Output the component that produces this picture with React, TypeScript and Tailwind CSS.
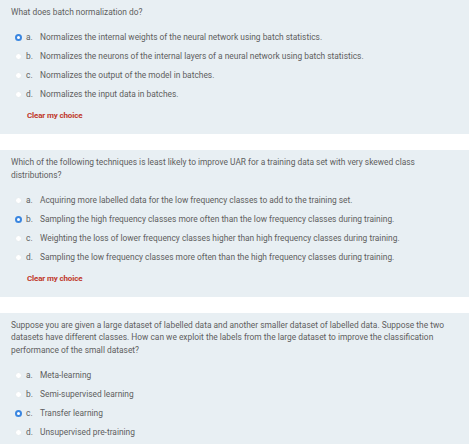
import React from "react";

type Opt = { l: string; t: string };
type Q = { q: string[]; opts: Opt[]; sel: number; clear: boolean; pt: string };

const questions: Q[] = [
  {
    q: ["What does batch normalization do?"],
    opts: [
      { l: "a.", t: "Normalizes the internal weights of the neural network using batch statistics." },
      { l: "b.", t: "Normalizes the neurons of the internal layers of a neural network using batch statistics." },
      { l: "c.", t: "Normalizes the output of the model in batches." },
      { l: "d.", t: "Normalizes the input data in batches." },
    ],
    sel: 0,
    clear: true,
    pt: "pt-[5.5px]",
  },
  {
    q: [
      "Which of the following techniques is least likely to improve UAR for a training data set with very skewed class",
      "distributions?",
    ],
    opts: [
      { l: "a.", t: "Acquiring more labelled data for the low frequency classes to add to the training set." },
      { l: "b.", t: "Sampling the high frequency classes more often than the low frequency classes during training." },
      { l: "c.", t: "Weighting the loss of lower frequency classes higher than high frequency classes during training." },
      { l: "d.", t: "Sampling the low frequency classes more often than the high frequency classes during training." },
    ],
    sel: 1,
    clear: true,
    pt: "pt-[6.5px]",
  },
  {
    q: [
      "Suppose you are given a large dataset of labelled data and another smaller dataset of labelled data. Suppose the two",
      "datasets have different classes. How can we exploit the labels from the large dataset to improve the classification",
      "performance of the small dataset?",
    ],
    opts: [
      { l: "a.", t: "Meta-learning" },
      { l: "b.", t: "Semi-supervised learning" },
      { l: "c.", t: "Transfer learning" },
      { l: "d.", t: "Unsupervised pre-training" },
    ],
    sel: 2,
    clear: false,
    pt: "pt-[6px]",
  },
];

function Radio({ on }: { on: boolean }) {
  return on ? (
    <span className="block w-[7px] h-[7px] shrink-0 rounded-full border-[2.2px] border-[#3a86e0] bg-white" />
  ) : (
    <span className="block w-[7px] h-[7px] shrink-0 rounded-full border border-[#e6ecef] bg-white" />
  );
}

export default function App() {
  return (
    <div className="w-[474px] h-[444px] overflow-hidden bg-white text-[#5e5e5e] font-['Roboto','Noto_Sans',sans-serif]">
      {questions.map((qq, i) => (
        <div
          key={i}
          className={`w-[469px] bg-[#e8eff3] ${qq.pt} pb-[12px] ${i > 0 ? "mt-[15.5px]" : ""}`}
        >
          <div className="pl-[11px] text-[8.4px] leading-[12.5px] whitespace-nowrap">
            {qq.q.map((line, j) => (
              <div key={j}>{line}</div>
            ))}
          </div>
          <div className="mt-[9.5px]">
            {qq.opts.map((o, j) => (
              <div key={j} className="flex items-center h-[19px] pl-[15px] text-[8.4px] whitespace-nowrap">
                <Radio on={qq.sel === j} />
                <span className="ml-[4px] w-[14px]">{o.l}</span>
                <span>{o.t}</span>
              </div>
            ))}
          </div>
          {qq.clear && (
            <div className="mt-[6.5px] pl-[27px] text-[8px] leading-[12px] font-bold text-[#c0392b] tracking-[-0.15px]">
              Clear my choice
            </div>
          )}
        </div>
      ))}
    </div>
  );
}
